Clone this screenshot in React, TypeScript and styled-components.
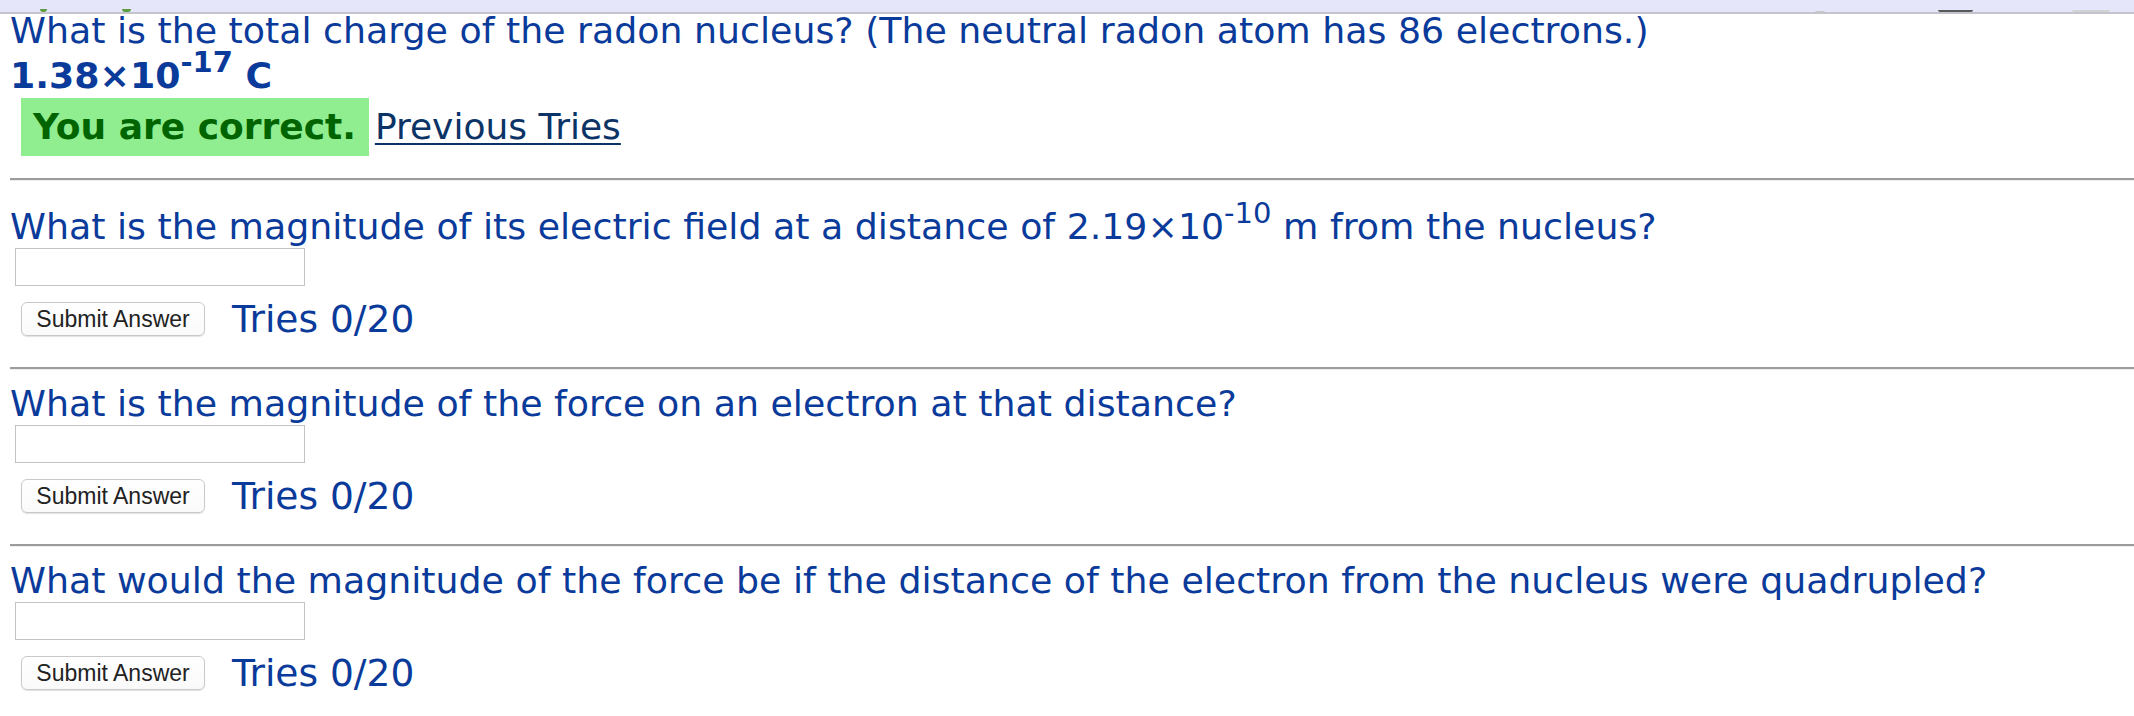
import React from "react";
import styled, { createGlobalStyle } from "styled-components";

const BLUE = "#0a3a9a";

const GlobalStyle = createGlobalStyle`
  html, body {
    margin: 0;
    padding: 0;
    background: #ffffff;
  }
  body {
    font-family: "DejaVu Sans", Verdana, sans-serif;
    color: ${BLUE};
  }
`;

const TopBar = styled.div`
  display: flex;
  align-items: flex-end;
  height: 12px;
  overflow: hidden;
  background: #e6e6fa;
  border-bottom: 2px solid #c4c4cc;
  padding-right: 24px;
`;

const Sliver = styled.span<{ $w: number; $ml: number; $c: string; $h?: number }>`
  display: block;
  width: ${(p) => p.$w}px;
  height: ${(p) => p.$h ?? 2}px;
  margin-left: ${(p) => p.$ml}px;
  background: ${(p) => p.$c};
  border-radius: 0 0 3px 3px;
`;

const Spacer = styled.span`
  flex: 1;
`;

const Page = styled.main`
  padding-left: 10px;
`;

const Line = styled.div`
  font-size: 36.3px;
  line-height: 32px;
  white-space: nowrap;

  sup {
    font-size: 0.8em;
    line-height: 0;
    vertical-align: 0.55em;
  }
`;

const Intro = styled.div`
  padding-top: 1px;
  padding-bottom: 22px;
`;

const Answer = styled(Line)`
  margin-top: 13px;
  font-weight: bold;
`;

const FeedbackRow = styled.div`
  display: flex;
  align-items: baseline;
  margin-top: 6px;
  font-size: 36px;
  line-height: 36px;
`;

const Correct = styled.span`
  margin-left: 11px;
  padding: 11px 13px 11px 12px;
  background: #90ee90;
  color: #006400;
  font-weight: bold;
  white-space: nowrap;
`;

const PrevTries = styled.a`
  margin-left: 6px;
  color: #0b3366;
  text-decoration: underline;
  text-underline-offset: 4px;
  text-decoration-thickness: 2px;
  white-space: nowrap;
`;

const Rule = styled.hr`
  margin: 0;
  height: 0;
  border: 0;
  border-top: 2px solid #9c9c9c;
  border-bottom: 1px solid #ededed;
`;

const Part = styled.section<{ $first?: boolean }>`
  padding-top: ${(p) => (p.$first ? 30 : 18)}px;
  padding-bottom: 31px;
`;

const AnswerInput = styled.input`
  display: block;
  box-sizing: border-box;
  width: 290px;
  height: 38px;
  margin: 5px 0 0 5px;
  border: 1px solid #c3c3c3;
  background: #ffffff;
  outline: none;
`;

const SubmitRow = styled.div`
  display: flex;
  align-items: center;
  margin-top: 16px;
  margin-left: 11px;
`;

const SubmitButton = styled.button`
  box-sizing: border-box;
  width: 184px;
  height: 34px;
  padding: 0;
  border: 1px solid #c9c9c9;
  border-radius: 6px;
  background: linear-gradient(#ffffff, #fafafa);
  box-shadow: 0 1px 1px rgba(0, 0, 0, 0.12);
  color: #222222;
  font-family: "Liberation Sans", Arial, sans-serif;
  font-size: 23px;
`;

const Tries = styled.span`
  margin-left: 27px;
  font-size: 37.6px;
  line-height: 34px;
  white-space: nowrap;
`;

type Question = { id: number; text: React.ReactNode };

const questions: Question[] = [
  {
    id: 2,
    text: (
      <>
        What is the magnitude of its electric field at a distance of 2.19×10<sup>-10</sup> m from the
        nucleus?
      </>
    ),
  },
  { id: 3, text: "What is the magnitude of the force on an electron at that distance?" },
  {
    id: 4,
    text: "What would the magnitude of the force be if the distance of the electron from the nucleus were quadrupled?",
  },
];

const QuestionPart = ({ q, first, last }: { q: Question; first: boolean; last: boolean }) => (
  <>
    <Part $first={first}>
      <Line>{q.text}</Line>
      <AnswerInput type="text" aria-label={`answer ${q.id}`} />
      <SubmitRow>
        <SubmitButton type="button">Submit Answer</SubmitButton>
        <Tries>Tries 0/20</Tries>
      </SubmitRow>
    </Part>
    {!last && <Rule />}
  </>
);

export default function App() {
  return (
    <>
      <GlobalStyle />
      <TopBar>
        <Sliver $w={7} $ml={40} $c="#5f9c3e" $h={3} />
        <Sliver $w={9} $ml={75} $c="#5f9c3e" $h={3} />
        <Spacer />
        <Sliver $w={10} $ml={0} $c="#c8c8c8" $h={1} />
        <Sliver $w={35} $ml={113} $c="#5a5a5a" />
        <Sliver $w={38} $ml={99} $c="#d2d2d2" />
      </TopBar>
      <Page>
        <Intro>
          <Line>
            What is the total charge of the radon nucleus? (The neutral radon atom has 86 electrons.)
          </Line>
          <Answer>
            1.38×10<sup>-17</sup> C
          </Answer>
          <FeedbackRow>
            <Correct>You are correct.</Correct>
            <PrevTries href="#">Previous Tries</PrevTries>
          </FeedbackRow>
        </Intro>
        <Rule />
        {questions.map((q, i) => (
          <QuestionPart key={q.id} q={q} first={i === 0} last={i === questions.length - 1} />
        ))}
      </Page>
    </>
  );
}
